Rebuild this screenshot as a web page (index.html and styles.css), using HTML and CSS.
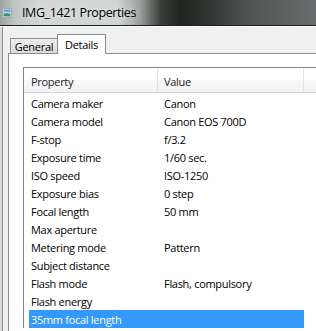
FILE: index.html
```html
<!DOCTYPE html>
<html>
<head>
<meta http-equiv="Content-Type" content="text/html; charset=utf-8"/>
<title>IMG_1421 Properties</title>
<link rel="stylesheet" href="styles.css">
</head>
<body>
<div class="window">
  <div class="titlebar">
    <svg class="app-icon" width="10" height="10" viewBox="0 0 10 10">
      <rect x="0.5" y="0.5" width="9" height="9" fill="#f2f5f7" stroke="#a3abb0"/>
      <rect x="1.5" y="1.5" width="7" height="4" fill="#4d9bd6"/>
      <rect x="1.5" y="3.5" width="7" height="2" fill="#a6d3ee"/>
      <path d="M1.5 6 L4 5.2 L8.5 6 V8.5 H1.5 Z" fill="#3e8b78"/>
    </svg>
    <span class="title">IMG_1421 Properties</span>
  </div>

  <div class="frame">
    <div class="tabs">
      <div class="tab">General</div>
      <div class="tab active">Details</div>
    </div>

    <div class="panel">
      <div class="list">
        <div class="list-head">
          <div class="hcell first">Property</div>
          <div class="hcell second">Value</div>
          <div class="hcell rest"></div>
        </div>
        <div class="list-body">
          <div class="row"><span>Camera maker</span><span>Canon</span></div>
          <div class="row"><span>Camera model</span><span>Canon EOS 700D</span></div>
          <div class="row"><span>F-stop</span><span>f/3.2</span></div>
          <div class="row"><span>Exposure time</span><span>1/60 sec.</span></div>
          <div class="row"><span>ISO speed</span><span>ISO-1250</span></div>
          <div class="row"><span>Exposure bias</span><span>0 step</span></div>
          <div class="row"><span>Focal length</span><span>50 mm</span></div>
          <div class="row"><span>Max aperture</span><span></span></div>
          <div class="row"><span>Metering mode</span><span>Pattern</span></div>
          <div class="row"><span>Subject distance</span><span></span></div>
          <div class="row"><span>Flash mode</span><span>Flash, compulsory</span></div>
          <div class="row"><span>Flash energy</span><span></span></div>
          <div class="row selected"><span>35mm focal length</span><span></span></div>
        </div>
      </div>
    </div>
  </div>
</div>
</body>
</html>
```

FILE: styles.css
```css
body {
  margin: 0;
  font-family: "Open Sans", "Noto Sans", sans-serif;
  font-size: 11px;
  letter-spacing: -0.3px;
  color: #000;
  background: #f0f0f0;
}

.window {
  width: 316px;
  height: 331px;
  overflow: hidden;
  display: flex;
  flex-direction: column;
}

/* title bar */
.titlebar {
  height: 25px;
  flex: none;
  display: flex;
  align-items: center;
  padding-left: 2px;
  border-bottom: 1px solid #1c201d;
  background: linear-gradient(to right,
    #9aa2a0 0, #bfc5c3 14px, #d3d7d5 40px, #d0d4d2 118px,
    #98a09d 140px, #3a423d 160px, #1f2520 180px, #2f3632 210px,
    #4f5755 250px, #666d6c 316px);
}

.app-icon {
  margin-top: 1px;
}

.title {
  margin-left: 10px;
  font-size: 12.5px;
  letter-spacing: -0.4px;
  color: #000;
  text-shadow: 0 0 6px rgba(255, 255, 255, 0.8);
}

/* window body */
.frame {
  flex: 1;
  display: flex;
  flex-direction: column;
  border-top: 1px solid #fbfbfb;
  padding-top: 7px;
  background: linear-gradient(to right, #d9dcdc 0, #d9dcdc 2px, #8e9090 2px, #8e9090 3px, #f0f0f0 3px);
}

.tabs {
  display: flex;
  align-items: flex-end;
  padding-left: 10px;
  margin-bottom: -1px;
  position: relative;
  z-index: 1;
}

.tab {
  box-sizing: border-box;
  width: 48px;
  height: 16px;
  display: flex;
  align-items: center;
  justify-content: center;
  border: 1px solid #898c95;
  background: linear-gradient(#ececec, #dcdcdc);
  color: #000;
}

.tab.active {
  width: 49px;
  height: 20px;
  margin-left: -1px;
  border-bottom: none;
  background: #fff;
  padding-bottom: 1px;
}

.panel {
  flex: 1;
  margin-left: 8px;
  border-left: 1px solid #898c95;
  border-top: 1px solid #898c95;
  background: #fff;
  padding: 13px 0 0 14px;
}

/* list view */
.list {
  width: 330px;
  border: 1px solid #828790;
  border-bottom: none;
}

.list-head {
  display: flex;
  height: 24px;
  border-bottom: 1px solid #d5d5d5;
  background: linear-gradient(#ffffff 0, #ffffff 50%, #f7f8f9 50%, #f2f3f5 100%);
}

.hcell {
  box-sizing: border-box;
  display: flex;
  align-items: center;
  padding-top: 2px;
  color: #1b1b1b;
}

.hcell.first {
  width: 134px;
  padding-left: 7px;
  border-right: 1px solid #e3e4e6;
}

.hcell.second {
  width: 146px;
  padding-left: 6px;
  border-right: 1px solid #e3e4e6;
}

.hcell.rest {
  flex: 1;
}

.list-body {
  padding-top: 1px;
}

.row {
  display: grid;
  grid-template-columns: 133px 142px;
  width: 275px;
  height: 18px;
  margin-left: 5px;
  align-items: center;
}

.row span {
  padding-left: 2px;
  white-space: nowrap;
}

.row.selected {
  background: #3399ff;
  color: #fff;
}
```
